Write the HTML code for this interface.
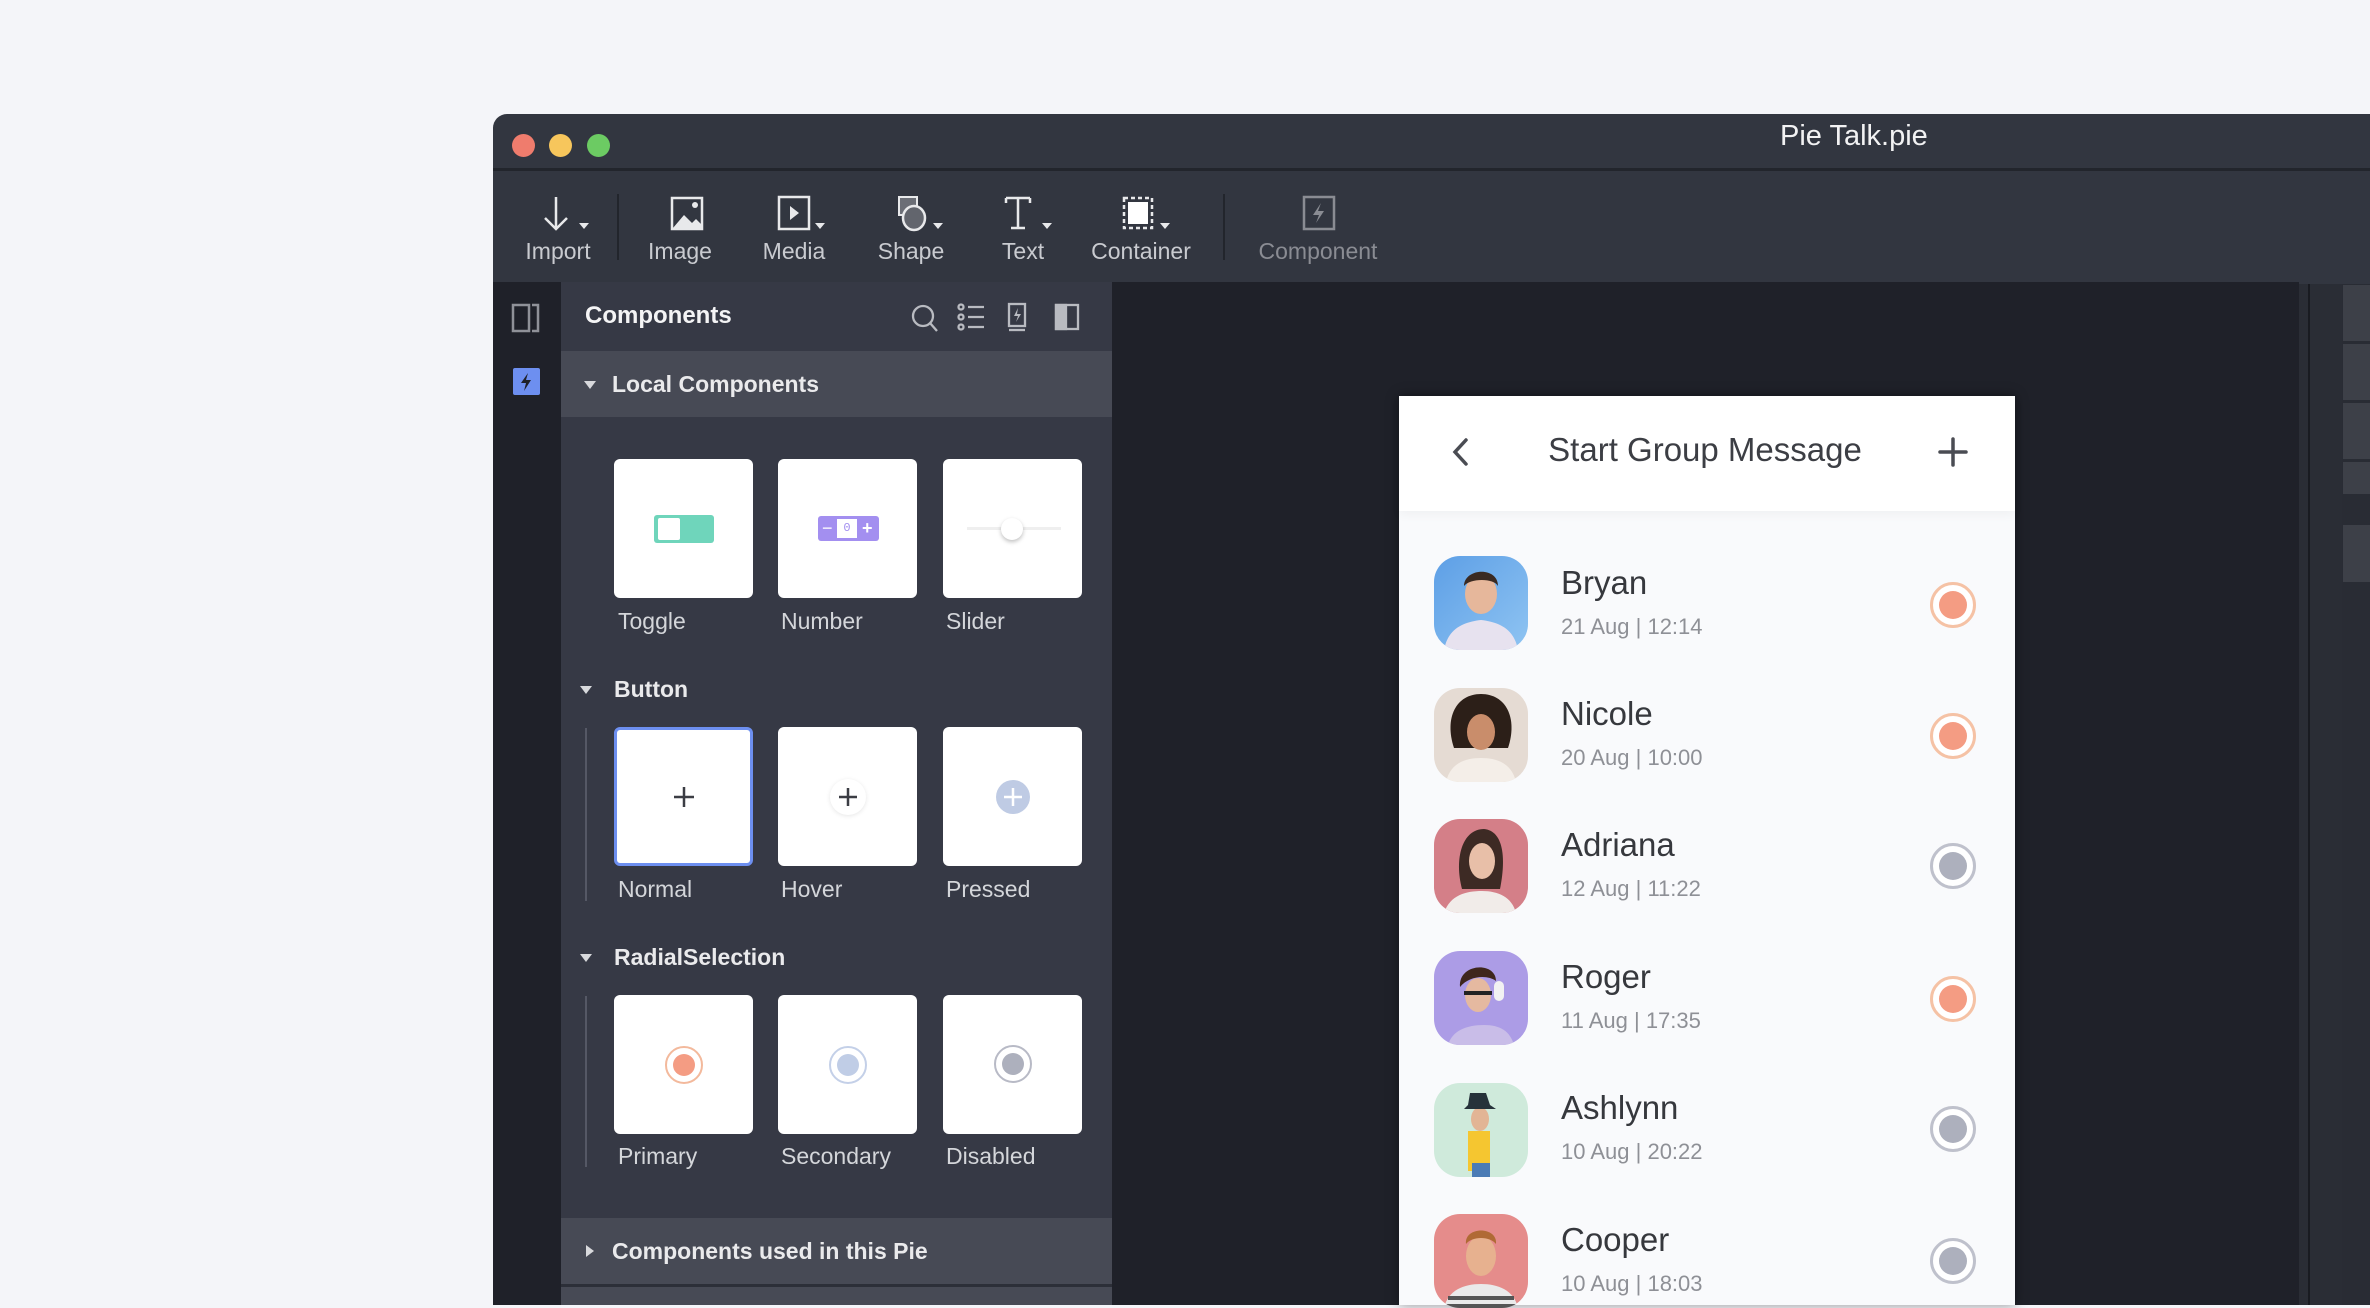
<!DOCTYPE html>
<html><head><meta charset="utf-8"><style>
*{margin:0;padding:0;box-sizing:border-box}
body{width:2370px;height:1305px;overflow:hidden;background:#f4f5f9;font-family:"Liberation Sans",sans-serif;position:relative}
.a{position:absolute}
.win{left:493px;top:114px;width:1877px;height:1191px;background:#323640;border-top-left-radius:14px;overflow:hidden}
.dot{position:absolute;top:134px;width:23px;height:23px;border-radius:50%}
.tb{color:#c9cbd0;font-size:23px;text-align:center;width:160px;top:238px}
.sep{background:#22252c;width:2px;top:194px;height:66px}
.card{position:absolute;width:139px;height:139px;background:#fff;border-radius:6px}
.lbl{position:absolute;color:#d4d6da;font-size:23px}
.hdr{position:absolute;color:#e2e3e6;font-size:23px;font-weight:bold}
.tri{position:absolute;width:0;height:0;border-left:6px solid transparent;border-right:6px solid transparent;border-top:8px solid #d8d9dc}
.vl{position:absolute;left:585px;width:2px;background:#555865}
.name{position:absolute;left:1561px;font-size:33px;color:#36383d}
.date{position:absolute;left:1561px;font-size:22px;color:#8e9096}
.av{position:absolute;left:1434px;width:94px;height:94px;border-radius:26px;overflow:hidden}
.rad{position:absolute;left:1930px;width:46px;height:46px;border-radius:50%;border:3px solid;background:#fff}
.rad i{position:absolute;left:6px;top:6px;width:28px;height:28px;border-radius:50%}
.or{border-color:#f5c2a5}.or i{background:#f49c83}
.gr{border-color:#bfc1cc}.gr i{background:#adb0bd}
.plus{position:absolute;left:50%;top:50%;transform:translate(-50%,-50%)}
</style></head><body>
<div class="a win"></div>
<div class="dot" style="left:512px;background:#ef7c6d"></div>
<div class="dot" style="left:549px;background:#f7c65c"></div>
<div class="dot" style="left:587px;background:#6ccb63"></div>
<div class="a" style="left:1780px;top:120px;font-size:29px;color:#f2f2f3">Pie Talk.pie</div>
<div class="a" style="left:493px;top:168px;width:1877px;height:3px;background:#22252c"></div>
<svg class="a" style="left:493px;top:185px" width="1000" height="60" fill="none" stroke="#e8e9eb" stroke-width="2.5">
<path d="M63 12V44M52 33L63 44L74 33"/><path d="M86 38h10l-5 6z" fill="#e8e9eb" stroke="none"/>
<rect x="179" y="13" width="30" height="31" stroke-width="2.5"/><path d="M180 43L191 30L199 38L203 34L208 39V43Z" fill="#e8e9eb" stroke="none"/><circle cx="202" cy="20" r="3" fill="#e8e9eb" stroke="none"/>
<rect x="286" y="12" width="30" height="32"/><path d="M297 21L306 28L297 35Z" fill="#e8e9eb" stroke="none"/><path d="M322 38h10l-5 6z" fill="#e8e9eb" stroke="none"/>
<rect x="406" y="12" width="18" height="18" fill="#6b6e76" stroke="#e8e9eb" stroke-width="2"/><ellipse cx="421" cy="33" rx="11" ry="12" fill="#62656d"/><path d="M440 38h10l-5 6z" fill="#e8e9eb" stroke="none"/>
<path d="M513 13H537M525 13V43M518 43H532M513 13v5M537 13v5"/><path d="M549 38h10l-5 6z" fill="#e8e9eb" stroke="none"/>
<rect x="631" y="13" width="28" height="30" stroke-dasharray="4 3"/><rect x="635" y="17" width="20" height="22" fill="#fff" stroke="none"/><path d="M667 38h10l-5 6z" fill="#e8e9eb" stroke="none"/>
<rect x="811" y="12" width="30" height="32" stroke="#8a8c93"/><path d="M828 18L820 30H826L823 38L831 26H825Z" fill="#8a8c93" stroke="none"/>
</svg>
<div class="a tb" style="left:478px">Import</div>
<div class="a tb" style="left:600px">Image</div>
<div class="a tb" style="left:714px">Media</div>
<div class="a tb" style="left:831px">Shape</div>
<div class="a tb" style="left:943px">Text</div>
<div class="a tb" style="left:1061px">Container</div>
<div class="a tb" style="left:1238px;color:#8a8c93">Component</div>
<div class="a sep" style="left:617px"></div>
<div class="a sep" style="left:1223px"></div>
<div class="a" style="left:493px;top:282px;width:68px;height:1023px;background:#1f2129"></div>
<svg class="a" style="left:510px;top:302px" width="34" height="100" fill="none" stroke="#8f9198" stroke-width="2.5"><rect x="3" y="3" width="16" height="26"/><path d="M22 3h6v26h-6"/><rect x="3" y="66" width="27" height="27" fill="#6d8ff0" stroke="none" rx="2"/><path d="M18 71L11 81H16L14 89L21 78H16Z" fill="#1f2129" stroke="none"/></svg>
<div class="a" style="left:561px;top:282px;width:551px;height:1023px;background:#363945"></div>
<div class="a" style="left:585px;top:302px;font-size:24px;font-weight:bold;color:#f4f4f5">Components</div>
<svg class="a" style="left:905px;top:300px" width="190" height="36" fill="none" stroke="#b9bbc1" stroke-width="2.3"><circle cx="18" cy="16" r="10"/><path d="M25 23L32 31"/><circle cx="56" cy="7" r="2.5"/><circle cx="56" cy="17" r="2.5"/><circle cx="56" cy="27" r="2.5"/><path d="M63 7H79M63 17H79M63 27H79"/><rect x="104" y="4" width="16" height="22"/><path d="M104 30H120"/><path d="M113 8L109 16H113L111 22L116 14H112Z" fill="#b9bbc1" stroke="none"/><rect x="151" y="5" width="22" height="24"/><rect x="151" y="5" width="10" height="24" fill="#b9bbc1"/></svg>
<div class="a" style="left:561px;top:351px;width:551px;height:66px;background:#474a55"></div>
<div class="tri" style="left:584px;top:381px"></div>
<div class="hdr" style="left:612px;top:371px;color:#eaeaec">Local Components</div>
<div class="card" style="left:614px;top:459px"><div class="a" style="left:40px;top:56px;width:60px;height:28px;background:#6fd5bb;border-radius:3px"></div><div class="a" style="left:44px;top:59px;width:22px;height:22px;background:#fff;border-radius:2px"></div></div>
<div class="card" style="left:778px;top:459px"><div class="a" style="left:40px;top:57px;width:61px;height:25px;background:#a38ff0;border-radius:3px"></div><div class="a" style="left:59px;top:60px;width:20px;height:19px;background:#fff;font:12px 'Liberation Mono',monospace;color:#a38ff0;text-align:center;line-height:19px">0</div><div class="a" style="left:44px;top:57px;color:#fff;font-size:18px;line-height:25px">−</div><div class="a" style="left:84px;top:57px;color:#fff;font-size:18px;line-height:25px;font-weight:bold">+</div></div>
<div class="card" style="left:943px;top:459px"><div class="a" style="left:24px;top:68px;width:94px;height:3px;background:#efefef"></div><div class="a" style="left:58px;top:59px;width:22px;height:22px;border-radius:50%;background:#fff;box-shadow:0 2px 4px rgba(0,0,0,.25)"></div></div>
<div class="lbl" style="left:618px;top:608px">Toggle</div>
<div class="lbl" style="left:781px;top:608px">Number</div>
<div class="lbl" style="left:946px;top:608px">Slider</div>
<div class="tri" style="left:580px;top:686px"></div>
<div class="hdr" style="left:614px;top:676px;color:#eaeaec">Button</div>
<div class="vl" style="top:728px;height:173px"></div>
<div class="card" style="left:614px;top:727px;border:3px solid #6d8ff0"><svg class="plus" width="22" height="22" stroke="#3b3d44" stroke-width="2.5"><path d="M11 1V21M1 11H21"/></svg></div>
<div class="card" style="left:778px;top:727px"><div class="plus" style="width:36px;height:36px;border-radius:50%;box-shadow:0 1px 5px rgba(0,0,0,.1)"></div><svg class="plus" width="20" height="20" stroke="#3b3d44" stroke-width="2.5"><path d="M10 1V19M1 10H19"/></svg></div>
<div class="card" style="left:943px;top:727px"><div class="plus" style="width:34px;height:34px;border-radius:50%;background:#bfcbe4"></div><svg class="plus" width="20" height="20" stroke="#fff" stroke-width="2.5"><path d="M10 1V19M1 10H19"/></svg></div>
<div class="lbl" style="left:618px;top:876px">Normal</div>
<div class="lbl" style="left:781px;top:876px">Hover</div>
<div class="lbl" style="left:946px;top:876px">Pressed</div>
<div class="tri" style="left:580px;top:954px"></div>
<div class="hdr" style="left:614px;top:944px;color:#eaeaec">RadialSelection</div>
<div class="vl" style="top:996px;height:171px"></div>
<div class="card" style="left:614px;top:995px"><div class="a" style="left:51px;top:51px;width:38px;height:38px;border-radius:50%;border:2px solid #f3b99c"></div><div class="a" style="left:59px;top:59px;width:22px;height:22px;border-radius:50%;background:#f49c83"></div></div>
<div class="card" style="left:778px;top:995px"><div class="a" style="left:51px;top:51px;width:38px;height:38px;border-radius:50%;border:2px solid #c4d0e8"></div><div class="a" style="left:59px;top:59px;width:22px;height:22px;border-radius:50%;background:#c0cde6"></div></div>
<div class="card" style="left:943px;top:995px"><div class="a" style="left:51px;top:50px;width:38px;height:38px;border-radius:50%;border:2px solid #b8bac6"></div><div class="a" style="left:59px;top:58px;width:22px;height:22px;border-radius:50%;background:#adb0bd"></div></div>
<div class="lbl" style="left:618px;top:1143px">Primary</div>
<div class="lbl" style="left:781px;top:1143px">Secondary</div>
<div class="lbl" style="left:946px;top:1143px">Disabled</div>
<div class="a" style="left:561px;top:1218px;width:551px;height:66px;background:#474a55"></div>
<div class="a" style="left:586px;top:1245px;width:0;height:0;border-top:6px solid transparent;border-bottom:6px solid transparent;border-left:8px solid #d8d9dc"></div>
<div class="hdr" style="left:612px;top:1238px;color:#eaeaec">Components used in this Pie</div>
<div class="a" style="left:561px;top:1284px;width:551px;height:3px;background:#2c2f38"></div>
<div class="a" style="left:561px;top:1287px;width:551px;height:18px;background:#474a55"></div>
<div class="a" style="left:1112px;top:282px;width:1187px;height:1023px;background:#1f2129"></div>
<div class="a" style="left:2299px;top:284px;width:9px;height:1021px;background:#2a2d35"></div>
<div class="a" style="left:2308px;top:284px;width:2px;height:1021px;background:#191b21"></div>
<div class="a" style="left:2310px;top:284px;width:32px;height:1021px;background:#2a2d35"></div>
<div class="a" style="left:2342px;top:284px;width:28px;height:1021px;background:#292c34"></div>
<div class="a" style="left:2343px;top:285px;width:27px;height:56px;background:#3d4048"></div>
<div class="a" style="left:2343px;top:344px;width:27px;height:56px;background:#3d4048"></div>
<div class="a" style="left:2343px;top:403px;width:27px;height:56px;background:#3d4048"></div>
<div class="a" style="left:2343px;top:462px;width:27px;height:32px;background:#3d4048"></div>
<div class="a" style="left:2343px;top:525px;width:27px;height:57px;background:#3d4048"></div>
<div class="a" style="left:1399px;top:396px;width:616px;height:909px;background:#f9fafc;box-shadow:0 0 12px rgba(0,0,0,.4)"></div>
<div class="a" style="left:1399px;top:396px;width:616px;height:115px;background:#fff;box-shadow:0 4px 10px rgba(0,0,0,.04)"></div>
<svg class="a" style="left:1445px;top:436px" width="530" height="34" fill="none" stroke="#4a4c53" stroke-width="3.5" stroke-linecap="round"><path d="M21 4L10 16L21 28"/><path d="M508 3V29M495 16H521"/></svg>
<div class="a" style="left:1400px;width:610px;top:431px;text-align:center;font-size:33px;color:#3c3e44">Start Group Message</div>
<div class="av" style="top:556px;background:linear-gradient(135deg,#5d9fe6,#8fc4f2)"><svg width="94" height="94"><path d="M10 94C14 72 30 66 47 64C64 66 80 72 84 94Z" fill="#e7e2ef"/><ellipse cx="47" cy="38" rx="16" ry="20" fill="#e6b79b"/><path d="M30 30C30 12 64 10 64 30C60 22 36 22 30 30Z" fill="#3a2a22"/></svg></div>
<div class="name" style="top:564px">Bryan</div><div class="date" style="top:614px">21 Aug | 12:14</div>
<div class="rad or" style="top:582px"><i></i></div>
<div class="av" style="top:688px;background:#e5dbd3"><svg width="94" height="94"><path d="M20 60C10 30 22 6 47 6C72 6 84 30 74 60Z" fill="#2c1f18"/><path d="M12 94C16 76 30 70 47 70C64 70 78 76 82 94Z" fill="#f4eee8"/><ellipse cx="47" cy="44" rx="14" ry="18" fill="#c98d6b"/></svg></div>
<div class="name" style="top:695px">Nicole</div><div class="date" style="top:745px">20 Aug | 10:00</div>
<div class="rad or" style="top:713px"><i></i></div>
<div class="av" style="top:819px;background:#d47f88"><svg width="94" height="94"><path d="M28 70C20 40 28 10 50 10C70 12 72 40 66 70Z" fill="#3d2a24"/><path d="M10 94C16 76 32 72 48 72C64 72 78 78 82 94Z" fill="#f1ece9"/><ellipse cx="48" cy="42" rx="13" ry="18" fill="#e8bfa8"/></svg></div>
<div class="name" style="top:826px">Adriana</div><div class="date" style="top:876px">12 Aug | 11:22</div>
<div class="rad gr" style="top:843px"><i></i></div>
<div class="av" style="top:951px;background:#ac9ce6"><svg width="94" height="94"><path d="M14 94C18 80 32 74 50 74C66 74 76 80 80 94Z" fill="#c9bde8"/><ellipse cx="44" cy="44" rx="13" ry="17" fill="#e5b9a0"/><path d="M26 36C24 12 62 10 62 30C54 24 36 24 26 36Z" fill="#3e261c"/><path d="M30 42H58" stroke="#222" stroke-width="4"/><rect x="60" y="30" width="10" height="20" rx="5" fill="#f2f2f2"/></svg></div>
<div class="name" style="top:958px">Roger</div><div class="date" style="top:1008px">11 Aug | 17:35</div>
<div class="rad or" style="top:976px"><i></i></div>
<div class="av" style="top:1083px;background:#cfeadb"><svg width="94" height="94"><rect x="34" y="48" width="22" height="40" fill="#f5c630"/><rect x="38" y="80" width="18" height="14" fill="#4b7bb5"/><ellipse cx="46" cy="36" rx="9" ry="12" fill="#e2b595"/><path d="M30 26H62L56 22L52 10H36L34 22Z" fill="#26323a"/></svg></div>
<div class="name" style="top:1089px">Ashlynn</div><div class="date" style="top:1139px">10 Aug | 20:22</div>
<div class="rad gr" style="top:1106px"><i></i></div>
<div class="av" style="top:1214px;background:#e58c8b"><svg width="94" height="94"><path d="M10 94C14 76 30 70 47 70C64 70 80 76 84 94Z" fill="#eaeaea"/><path d="M14 84H80M12 92H82" stroke="#555" stroke-width="4"/><ellipse cx="47" cy="42" rx="15" ry="20" fill="#e7b18f"/><path d="M32 30C30 12 64 12 62 30C56 22 38 22 32 30Z" fill="#b06a35"/></svg></div>
<div class="name" style="top:1221px">Cooper</div><div class="date" style="top:1271px">10 Aug | 18:03</div>
<div class="rad gr" style="top:1238px"><i></i></div>
</body></html>
